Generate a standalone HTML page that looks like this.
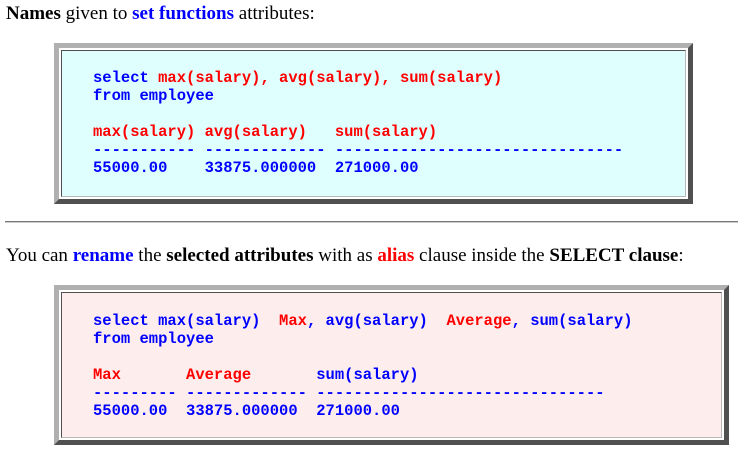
<!DOCTYPE html>
<html><head><style>
body{margin:0;width:739px;height:453px;background:#fff;position:relative;font-family:"Liberation Serif",serif;font-size:19px;color:#000;overflow:hidden}
.p{position:absolute;left:6px;white-space:nowrap;line-height:22px}
.b{color:#00f;font-weight:bold}
.r{color:#f00;font-weight:bold}
.box{position:absolute;box-sizing:border-box;border:5px solid;border-color:#b0b0b0 #505050 #505050 #b0b0b0;padding:2px}
.in{box-sizing:border-box;width:100%;height:100%;border:1px solid;border-color:#505050 #b8b8b8 #b8b8b8 #505050}
pre{margin:0;position:absolute;left:93px;font-family:"Liberation Mono",monospace;font-size:15.5px;font-weight:bold;line-height:18px;color:#00f}
pre i{font-style:normal;color:#f00}
hr{position:absolute;left:5px;top:221px;width:733px;margin:0;border:0;border-top:1px solid #777;border-bottom:1px solid #ccc;height:0}
</style></head><body>
<div class="p" style="top:3px"><b>Names</b> given to <span class="b">set functions</span> attributes:</div>
<div class="box" style="left:54px;top:43px;width:639px;height:161px"><div class="in" style="background:#dfffff"></div></div>
<pre style="top:69px">select <i>max(salary), avg(salary), sum(salary)</i>
from employee

<i>max(salary) avg(salary)   sum(salary)</i>
----------- ------------- -------------------------------
55000.00    33875.000000  271000.00</pre>
<hr>
<div class="p" style="top:245px">You can <span class="b">rename</span> the <b>selected attributes</b> with as <span class="r">alias</span> clause inside the <b>SELECT clause</b>:</div>
<div class="box" style="left:54px;top:285px;width:675px;height:160px"><div class="in" style="background:#fdeded"></div></div>
<pre style="top:312px">select max(salary)  <i>Max</i>, avg(salary)  <i>Average</i>, sum(salary)
from employee

<i>Max       Average</i>       sum(salary)
--------- ------------- -------------------------------
55000.00  33875.000000  271000.00</pre>
</body></html>
